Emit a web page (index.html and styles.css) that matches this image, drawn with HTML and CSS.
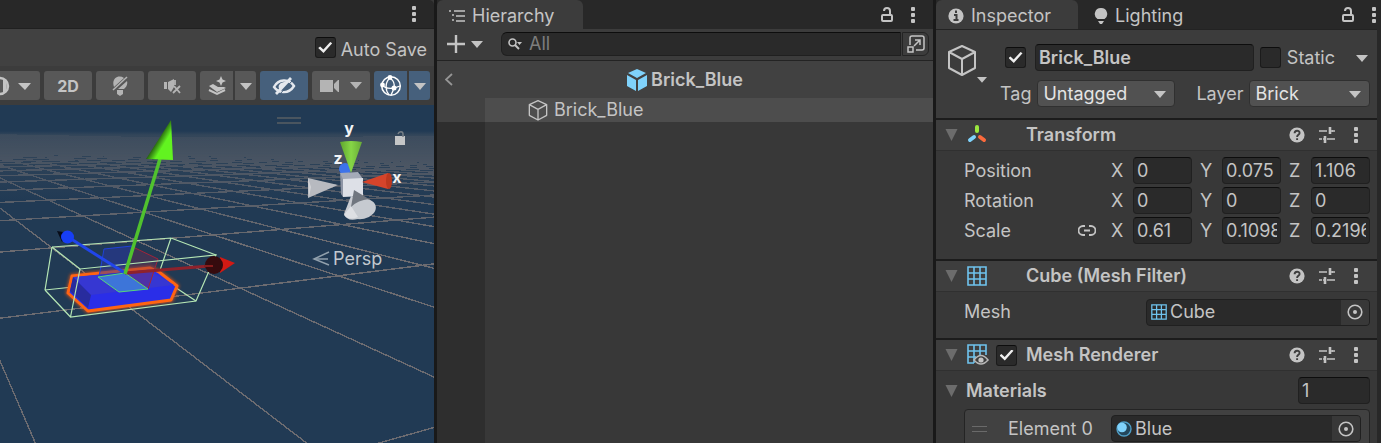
FILE: index.html
```html
<!DOCTYPE html>
<html lang="en">
<head>
<meta charset="utf-8">
<title>Prefab editor</title>
<link rel="stylesheet" href="styles.css">
</head>
<body>
<svg class="defs" aria-hidden="true">
  <symbol id="caret" viewBox="0 0 12 8"><path d="M0 1h12L6 8z" fill="currentColor"/></symbol>
  <symbol id="fold" viewBox="0 0 12 12"><path d="M0 0h12L6 12z" fill="currentColor"/></symbol>
  <symbol id="dots" viewBox="0 0 4 16"><g fill="currentColor"><rect width="4" height="4" rx="1"/><rect y="6" width="4" height="4" rx="1"/><rect y="12" width="4" height="4" rx="1"/></g></symbol>
  <symbol id="lock" viewBox="0 0 12 16"><g fill="none" stroke="currentColor" stroke-width="2"><rect x="1" y="8" width="10" height="6" rx="1"/><path d="M3 4c0-4 6-4 6 0v4"/></g></symbol>
  <symbol id="cube" viewBox="0 0 30 32"><path d="M15 2l13 6v16l-13 7L2 24V8zM2 8l13 7 13-7M15 15v16" fill="none" stroke="currentColor" stroke-width="2" stroke-linejoin="round"/></symbol>
  <symbol id="prefab" viewBox="0 0 20 22"><path d="M10 0l9 4-9 5-9-5z M0 6l9 5v11l-9-5z M20 6l-9 5v11l9-5z" fill="#7fd2fb"/></symbol>
  <symbol id="help" viewBox="0 0 16 16"><circle cx="8" cy="8" r="7.6" fill="currentColor"/><path d="M5.600 6.200c0-3.400 5-3.200 5-.3 0 1.900-2.500 1.900-2.500 4M8.100 11.200v1.900" fill="none" stroke="#3e3e3e" stroke-width="1.900"/></symbol>
  <symbol id="preset" viewBox="0 0 16 16"><path d="M0 4h8M13 4h3M0 12h3M8 12h8" stroke="currentColor" stroke-width="1.600"/><path d="M11 0v7M6 9v7" stroke="currentColor" stroke-width="2.600"/><path d="M11 4h3M4 12h3" stroke="currentColor" stroke-width="1.600"/></symbol>
  <symbol id="mesh" viewBox="0 0 20 20"><path d="M1 1h18v18H1zM7 1v18M13 1v18M1 7h18M1 13h18" fill="none" stroke="#6fc3ee" stroke-width="1.600"/></symbol>
  <symbol id="target" viewBox="0 0 16 16"><circle cx="8" cy="8" r="6.800" fill="none" stroke="currentColor" stroke-width="1.600"/><circle cx="8" cy="8" r="2" fill="currentColor"/></symbol>
</svg>

<main class="editor">
  <section class="panel" aria-label="Scene">
    <header class="tabs tabs-end">
      <button class="icon-btn" aria-label="Scene menu"><svg class="i-dots"><use href="#dots"/></svg></button>
    </header>
    <div class="autosave"><input class="check" type="checkbox" id="autosave" checked><label for="autosave">Auto Save</label></div>
    <div class="tools">
      <button class="tool shade" aria-label="Draw mode"><svg width="40" height="20" viewBox="0 0 40 20"><circle cx="7" cy="10" r="8" fill="none" stroke="#c4c4c4" stroke-width="2.500"/><path d="M10 2c5 3 5 13 0 16M25 7h13l-6 7z" fill="#c4c4c4"/></svg></button>
      <button class="tool t2d">2D</button>
      <button class="tool" aria-label="Lighting"><svg width="20" height="20" viewBox="0 0 20 20"><path d="M4 11C1 3 8-2 14 2zM17 5c1 4-1 6-3 8H8zM7 14h6v4l-3 2-3-2z" fill="#b4b4b4"/><path d="M3 14L17 1" stroke="#b4b4b4" stroke-width="1.500"/></svg></button>
      <button class="tool" aria-label="Audio"><svg width="20" height="20" viewBox="0 0 20 20"><path d="M2 6h3v7H2zM6 6l6-3v8l-3 5-3-3z" fill="#b4b4b4"/><path d="M12 10l6 7M18 10l-7 7M13 4v5" stroke="#b4b4b4" stroke-width="1.800"/></svg></button>
      <div class="pair">
        <button class="tool main" aria-label="Effects"><svg width="20" height="20" viewBox="0 0 20 20"><path d="M2 10l4-2 5 3h6l2 1-9 4zM14 0l1.500 3.500L19 5l-3.500 1.500L14 10l-1.500-3.500L9 5l3.500-1.500z" fill="#c4c4c4"/><path d="M2 14l8 4 8-4" fill="none" stroke="#c4c4c4" stroke-width="2"/></svg></button>
        <button class="tool drop" aria-label="Effects menu"><svg class="i-caret"><use href="#caret"/></svg></button>
      </div>
      <button class="tool on" aria-label="Scene visibility"><svg width="24" height="20" viewBox="0 0 24 20"><path d="M2 11C6 3 17 2 22 10 17 18 7 18 2 11z" fill="none" stroke="#e4e8ee" stroke-width="2.400"/><path d="M9 7l6-2-7 9c-2-2-2-5 1-7z" fill="#e4e8ee"/><path d="M4 18L19 2" stroke="#e4e8ee" stroke-width="2.800"/><path d="M7 19L21 4" stroke="#46607c" stroke-width="1"/></svg></button>
      <button class="tool cam" aria-label="Camera"><svg width="42" height="14" viewBox="0 0 42 14"><path d="M0 1h13v12H0zM14 5l4-4h1v12h-1l-4-4zM30 3h12l-6 7z" fill="#b4b4b4"/></svg></button>
      <div class="pair">
        <button class="tool on main" aria-label="Gizmos"><svg width="24" height="24" viewBox="0 0 24 24"><circle cx="12" cy="12" r="9.300" fill="none" stroke="#fff" stroke-width="1.500"/><path d="M11 4C6 8 6 16 10 21M11 4c4 3 5 6 4 10-1 3-2 5-3 7M3 11c3 3 7 4 12 3l6-2" fill="none" stroke="#fff" stroke-width="1.300"/><g fill="#fff"><circle cx="11" cy="3.500" r="2.400"/><circle cx="3.500" cy="11" r="2.400"/><circle cx="15" cy="14" r="2.500"/></g></svg></button>
        <button class="tool on drop" aria-label="Gizmos menu"><svg class="i-caret"><use href="#caret"/></svg></button>
      </div>
    </div>
    <svg class="viewport" viewBox="0 105 434 338" preserveAspectRatio="xMinYMin slice" role="img" aria-label="Scene view">
      <defs>
        <linearGradient id="haze" x1="0" y1="0" x2="0" y2="1"><stop offset="0" stop-color="#5f6368" stop-opacity="0"/><stop offset=".06" stop-color="#5f6368" stop-opacity=".3"/><stop offset=".35" stop-color="#5f6368" stop-opacity=".22"/><stop offset="1" stop-color="#5f6368" stop-opacity="0"/></linearGradient>
        <linearGradient id="fade" gradientUnits="userSpaceOnUse" x1="0" y1="134" x2="0" y2="240"><stop offset="0" stop-color="#fff" stop-opacity=".15"/><stop offset=".3" stop-color="#fff" stop-opacity=".5"/><stop offset="1" stop-color="#fff"/></linearGradient>
        <mask id="far" maskUnits="userSpaceOnUse" x="0" y="134" width="434" height="309"><rect y="134" width="434" height="309" fill="url(#fade)"/></mask>
        <linearGradient id="gcone" gradientUnits="userSpaceOnUse" x1="153" y1="140" x2="163" y2="146"><stop offset="0" stop-color="#0a1a08"/><stop offset="1" stop-color="#62f320"/></linearGradient>
        <linearGradient id="ycone"><stop offset="0" stop-color="#5fa52e"/><stop offset=".5" stop-color="#86d646"/><stop offset="1" stop-color="#68aa38"/></linearGradient>
        <filter id="glow" x="-10%" y="-20%" width="120%" height="140%"><feGaussianBlur stdDeviation="1.500"/></filter>
      </defs>
      <rect y="105" width="434" height="338" fill="#213a54"/>
      <rect y="131" width="434" height="70" fill="url(#haze)"/>
      <g mask="url(#far)"><g id="grid" stroke="#6c6b70" stroke-width="1.400" shape-rendering="crispEdges"></g></g>

      <g fill="none" stroke="#b5e6b4" stroke-width="1.200"><path d="M52 247l119-9 45 17M45 290l112-12M171 238l-13 38 38 25M52 247l-7 43"/></g>
      <path d="M72 276l78-8 9 4 18 14-6 14-83 11-20-18z" fill="none" stroke="#ff5a10" stroke-width="5" stroke-linejoin="round" opacity=".6" filter="url(#glow)"/>
      <path d="M72 276l78-8 9 4 18 14-6 14-83 11-20-18z" fill="#2a2ee8" stroke="#ff6412" stroke-width="3" stroke-linejoin="round"/>
      <path d="M73 277l76-7 25 15-83 10z" fill="#3637d2"/>
      <path d="M73 277l18 18-3 13-18-17z" fill="#282c9e"/>
      <path d="M104 249l28-3-7 27-26 4z" fill="#2b37b0" fill-opacity=".45" stroke="#2041d8"/>
      <path d="M133 247l25 12-10 30-23-16z" fill="#7a2a55" fill-opacity=".35" stroke="#a0243a"/>
      <path d="M98 277l27-4 23 16-29 3z" fill="#4090dc" fill-opacity=".7" stroke="#57d67a"/>
      <path d="M52 247l28 22 136-14-20 46-125.500 16L45 290M80 269l-9.500 48" fill="none" stroke="#b5e6b4" stroke-width="1.200"/>
      <path d="M125 273L68 237" stroke="#2145ea" stroke-width="3"/>
      <path d="M57 231l12 2-7 9z" fill="#080c18"/><circle cx="67.500" cy="237" r="6.500" fill="#173ef5"/>
      <path d="M125 273l84-7" stroke="#8e222c" stroke-width="3"/>
      <path d="M220 257l15 6-15 10z" fill="#d21a14"/><circle cx="214" cy="265" r="9" fill="#350b0e"/><path d="M204 266h9" stroke="#851c1c" stroke-width="2"/>
      <path d="M125 274l35-115" stroke="#50c22e" stroke-width="3.500"/>
      <path d="M171 120l2 40-27-1z" fill="url(#gcone)"/>

      <path d="M277 118h24M277 123h24" stroke="#74706b" stroke-width="1.200"/>
      <circle cx="345" cy="169" r="6" fill="#3d73ea"/>
      <path d="M340 142q11-2 22 0l-11 31z" fill="url(#ycone)"/>
      <path d="M340 173l18-1 5 7-21 1z" fill="#a4aab8"/><path d="M340 173l3 6v18l-2-3z" fill="#8d95a5"/><path d="M343 179l20-1v18l-20 1z" fill="#dde0e7"/>
      <path d="M338 185l-30-7v20z" fill="#b7bac0"/><path d="M308 178l3 9-2 10z" fill="#d2d3d6"/>
      <path d="M362 182l26-9q5 8 0 16z" fill="#d5442b"/><ellipse cx="389" cy="181" rx="3" ry="8" fill="#bc381f"/>
      <path d="M351 196l-7 18q3 8 14 5l12-18z" fill="#c9ccd2"/><ellipse cx="362" cy="209" rx="14" ry="10" transform="rotate(-12 362 209)" fill="#c6cad0"/><path d="M351 206l-7 9q5 6 14 2z" fill="#dddfe3"/><path d="M354 190l15 9q-11 1-18 8z" fill="#70767f"/>
      <g class="axis"><text x="349" y="134">y</text><text x="338" y="164">z</text><text x="397" y="183">x</text></g>
      <path d="M395 136h10v9h-10z" fill="#c5c6c7"/><path d="M398 134c1-3 5-3 5 0v3" fill="none" stroke="#777f86" stroke-width="1.500"/>
      <path d="M329 252l-15 7 15 6" fill="none" stroke="#91a0ac" stroke-width="1.500"/><path d="M314 259h14" stroke="#91a0ac" stroke-width="1.500"/>
      <text class="persp" x="333" y="265">Persp</text>
    </svg>
  </section>

  <section class="panel" aria-label="Hierarchy">
    <header class="tabs">
      <button class="tab tab-on hier-tab"><svg width="16" height="12" viewBox="0 0 16 12"><path d="M0 1h2M3 5h2M3 10h2M5 1h11M7 6h9M7 11h9" stroke="#c4c4c4" stroke-width="1.600"/></svg>Hierarchy</button>
      <span class="tab-tools">
        <button class="icon-btn" aria-label="Lock hierarchy"><svg class="i-lock"><use href="#lock"/></svg></button>
        <button class="icon-btn" aria-label="Hierarchy menu"><svg class="i-dots"><use href="#dots"/></svg></button>
      </span>
    </header>
    <div class="hier-bar">
      <button class="icon-btn add" aria-label="Create"><svg width="18" height="18" viewBox="0 0 18 18"><path d="M0 9h18M9 0v18" stroke="#c4c4c4" stroke-width="2.400"/></svg><svg class="i-caret"><use href="#caret"/></svg></button>
      <div class="search">
        <svg width="14" height="12" viewBox="0 0 14 12"><circle cx="4.500" cy="4.500" r="3.500" fill="none" stroke="#c4c4c4" stroke-width="1.600"/><path d="M7 7l4 4" stroke="#c4c4c4" stroke-width="2"/><path d="M9 4h5l-2.500 3z" fill="#c4c4c4"/></svg>
        <input type="text" placeholder="All" aria-label="Search hierarchy">
      </div>
      <button class="picker" aria-label="Open search"><svg width="18" height="18" viewBox="0 0 18 18"><path d="M3 10V3q0-2 2-2h10q2 0 2 2v10q0 2-2 2H9M1 12h5v5H1zM7 11l6-6M8 5h5v5" fill="none" stroke="#c4c4c4" stroke-width="1.500"/></svg></button>
    </div>
    <div class="crumb">
      <button class="icon-btn" aria-label="Back"><svg width="8" height="13" viewBox="0 0 8 13"><path d="M7 1L1 6.500 7 12" fill="none" stroke="#969696" stroke-width="1.800"/></svg></button>
      <h2><svg width="20" height="22"><use href="#prefab"/></svg>Brick_Blue</h2>
    </div>
    <div class="tree">
      <div class="gutter gutter-on"></div>
      <div class="node"><svg width="20" height="22"><use href="#cube"/></svg>Brick_Blue</div>
      <div class="gutter"></div><div></div>
    </div>
  </section>

  <section class="panel inspector" aria-label="Inspector">
    <header class="tabs">
      <button class="tab tab-on insp-tab"><svg width="16" height="16" viewBox="0 0 16 16"><circle cx="8" cy="8" r="7.600" fill="#c4c4c4"/><path d="M8 2.500v2.500M6 7h2.500v5M5.500 12h5" fill="none" stroke="#3c3c3c" stroke-width="2"/></svg>Inspector</button>
      <button class="tab light-tab"><svg width="14" height="18" viewBox="0 0 14 18"><path d="M7 1a6 6 0 0 1 3.500 11h-7A6 6 0 0 1 7 1zM4 14h6l-2 3H6z" fill="#c4c4c4"/></svg>Lighting</button>
      <span class="tab-tools insp-tools">
        <button class="icon-btn" aria-label="Lock inspector"><svg class="i-lock"><use href="#lock"/></svg></button>
        <button class="icon-btn" aria-label="Inspector menu"><svg class="i-dots"><use href="#dots"/></svg></button>
      </span>
    </header>
    <div class="insp-body">
      <div class="object">
        <button class="icon-btn object-icon" aria-label="Select icon"><svg width="30" height="32"><use href="#cube"/></svg><svg class="i-caret"><use href="#caret"/></svg></button>
        <div class="object-fields">
          <div class="object-row name-row">
            <input class="check" type="checkbox" checked aria-label="Active">
            <input class="field name" type="text" value="Brick_Blue" aria-label="Name">
            <input class="check" type="checkbox" id="static"><label for="static">Static</label>
            <button class="icon-btn static-menu" aria-label="Static flags"><svg class="i-caret"><use href="#caret"/></svg></button>
          </div>
          <div class="object-row">
            <label for="tag">Tag</label>
            <span class="pick tag"><select id="tag"><option>Untagged</option></select><svg class="i-caret"><use href="#caret"/></svg></span>
            <label class="layer-label" for="layer">Layer</label>
            <span class="pick layer"><select id="layer"><option>Brick</option></select><svg class="i-caret"><use href="#caret"/></svg></span>
          </div>
        </div>
      </div>

      <div class="comp">
        <svg class="i-fold"><use href="#fold"/></svg>
        <svg width="20" height="20" viewBox="0 0 20 20"><g stroke-width="4" stroke-linecap="round"><path d="M10 2v4" stroke="#9be83f"/><path d="M7 12l-4 3" stroke="#7fd2fb"/><path d="M13 12l4 3" stroke="#fb6a3c"/></g></svg>
        <h3 class="wide">Transform</h3>
        <span class="comp-tools"><button class="icon-btn" aria-label="Transform help"><svg class="i16"><use href="#help"/></svg></button><button class="icon-btn" aria-label="Transform presets"><svg class="i16"><use href="#preset"/></svg></button><button class="icon-btn" aria-label="Transform menu"><svg class="i-dots"><use href="#dots"/></svg></button></span>
      </div>
      <div class="vectors">
        <div class="vector"><span>Position</span><label>X<input class="field" value="0"></label><label>Y<input class="field" value="0.075"></label><label>Z<input class="field" value="1.106"></label></div>
        <div class="vector"><span>Rotation</span><label>X<input class="field" value="0"></label><label>Y<input class="field" value="0"></label><label>Z<input class="field" value="0"></label></div>
        <div class="vector"><span class="scale">Scale<svg width="18" height="12" viewBox="0 0 18 12"><path d="M7 1H5a4.500 4.500 0 0 0 0 9h2M11 1h2a4.500 4.500 0 0 1 0 9h-2M6 5.500h6" fill="none" stroke="#c4c4c4" stroke-width="1.800"/></svg></span><label>X<input class="field" value="0.61"></label><label>Y<input class="field" value="0.1098"></label><label>Z<input class="field" value="0.2196"></label></div>
      </div>

      <div class="comp">
        <svg class="i-fold"><use href="#fold"/></svg>
        <svg width="20" height="20"><use href="#mesh"/></svg>
        <h3 class="wide">Cube (Mesh Filter)</h3>
        <span class="comp-tools"><button class="icon-btn" aria-label="Mesh Filter help"><svg class="i16"><use href="#help"/></svg></button><button class="icon-btn" aria-label="Mesh Filter presets"><svg class="i16"><use href="#preset"/></svg></button><button class="icon-btn" aria-label="Mesh Filter menu"><svg class="i-dots"><use href="#dots"/></svg></button></span>
      </div>
      <div class="mesh-row">
        <span>Mesh</span>
        <div class="object-field"><svg width="16" height="16"><use href="#mesh"/></svg><span>Cube</span><button aria-label="Select mesh"><svg class="i16"><use href="#target"/></svg></button></div>
      </div>

      <div class="comp">
        <svg class="i-fold"><use href="#fold"/></svg>
        <svg width="22" height="22" viewBox="0 0 22 22"><path d="M7 19H1V1h18v10M7 1v18M13 1v11M1 7h18M1 13h8" fill="none" stroke="#6fc3ee" stroke-width="1.600"/><path d="M7 16q7-9 14 0-7 8-14 0z" fill="#3e3e3e" stroke="#b8b8b8" stroke-width="1.600"/><circle cx="14" cy="16" r="2.600" fill="#c4c4c4"/></svg>
        <input class="check" type="checkbox" checked aria-label="Mesh Renderer enabled">
        <h3>Mesh Renderer</h3>
        <span class="comp-tools"><button class="icon-btn" aria-label="Mesh Renderer help"><svg class="i16"><use href="#help"/></svg></button><button class="icon-btn" aria-label="Mesh Renderer presets"><svg class="i16"><use href="#preset"/></svg></button><button class="icon-btn" aria-label="Mesh Renderer menu"><svg class="i-dots"><use href="#dots"/></svg></button></span>
      </div>
      <div class="materials">
        <svg class="i-fold"><use href="#fold"/></svg>
        <h3>Materials</h3>
        <input class="field" value="1" aria-label="Materials count">
      </div>
      <div class="list">
        <svg width="15" height="8" viewBox="0 0 15 8"><path d="M0 1.500h15M0 6.500h15" stroke="#6a6a6a"/></svg>
        <span>Element 0</span>
        <div class="object-field"><svg width="16" height="16" viewBox="0 0 16 16"><circle cx="8" cy="8" r="7" fill="#24475c" stroke="#4e9cc4" stroke-width="1.400"/><circle cx="6" cy="6.500" r="4.800" fill="#7fd2fb"/></svg><span>Blue</span><button aria-label="Select material"><svg class="i16"><use href="#target"/></svg></button></div>
      </div>
    </div>
  </section>
</main>
<script src="grid.js"></script>
</body>
</html>
```
FILE: styles.css
```css
* { box-sizing: border-box; }
body {
  margin: 0;
  background: #191919;
  color: #c4c4c4;
  font: 18px/24px Inter, "Liberation Sans", sans-serif;
}
button, input, select { font: inherit; color: inherit; }
button { border: 0; padding: 0; margin: 0; background: none; }
svg { display: block; flex: none; }
h2, h3 { margin: 0; font-size: 18px; font-weight: 600; white-space: nowrap; }
.defs { position: absolute; width: 0; height: 0; }

.editor {
  display: grid;
  grid-template-columns: minmax(0, 434fr) minmax(0, 496fr) minmax(0, 445fr);
  gap: 3px;
  height: 100vh;
  overflow: hidden;
}
.panel { display: flex; flex-direction: column; min-width: 0; min-height: 0; background: #383838; }

.icon-btn { display: flex; align-items: center; justify-content: center; }
.i-dots { width: 4px; height: 16px; }
.i-caret { width: 12px; height: 8px; }
.i-fold { width: 13px; height: 12px; color: #6c6c6c; }
.i-lock { width: 12px; height: 16px; }
.i16 { width: 16px; height: 16px; }

.tabs { display: flex; flex: none; height: 29px; background: #282828; }
.tabs-end { justify-content: flex-end; padding-right: 18px; border-bottom: 1px solid #202020; border-radius: 0 5px 0 0; }
.tab { display: flex; align-items: center; gap: 7px; padding-top: 3px; white-space: nowrap; }
.tab-on { background: #3c3c3c; border-radius: 6px 6px 0 0; }
.hier-tab { padding-left: 12px; padding-right: 29px; }
.insp-tab { padding-left: 12px; padding-right: 27px; }
.light-tab { padding-left: 16px; }
.tab-tools { display: flex; gap: 18px; margin-left: auto; padding-right: 18px; }
.insp-tools { padding-right: 5px; }

.check {
  appearance: none;
  flex: none;
  width: 21px;
  height: 21px;
  margin: 0;
  border: 1px solid #1b1b1b;
  border-top-color: #0d0d0d;
  border-radius: 3px;
  background: #2a2a2a;
  display: grid;
  place-items: center;
}
.check:checked::before {
  content: "";
  width: 14px;
  height: 11px;
  background: #eee;
  clip-path: polygon(0 55%, 14% 42%, 37% 68%, 86% 0, 100% 12%, 38% 100%);
}

.autosave { display: flex; flex: none; align-items: center; justify-content: flex-end; gap: 5px; height: 37px; padding-right: 7px; background: #414141; }
.autosave label { padding-top: 4px; }
.tools { display: flex; flex: none; align-items: center; justify-content: flex-end; gap: 4px; height: 39px; padding-right: 4px; background: #3c3c3c; }
.tool { display: flex; flex: none; align-items: center; justify-content: center; width: 48px; height: 29px; border-radius: 3px; background: #585858; }
.t2d { font-weight: 700; font-size: 16px; }
.shade { justify-content: flex-end; padding-right: 7px; }
.cam { width: 58px; }
.pair { display: flex; gap: 2px; }
.main { width: 33px; border-radius: 3px 0 0 3px; }
.drop { width: 21px; border-radius: 0 3px 3px 0; }
.on { background: #46607c; }
.viewport { flex: 1; width: 100%; min-height: 0; }
.axis { font-size: 16px; font-weight: 700; fill: #f2f4f6; text-anchor: middle; }
.persp { font-size: 18px; fill: #c2c8ce; }

.hier-bar { display: flex; flex: none; align-items: center; height: 32px; padding: 0 4px 2px 10px; background: #3c3c3c; border-bottom: 1px solid #232323; }
.add { gap: 6px; margin-right: 18px; }
.search { display: flex; flex: 1; align-items: center; gap: 5px; min-width: 0; height: 24px; padding-left: 6px; background: #2a2a2a; border: 1px solid #202020; border-top-color: #0d0d0d; border-radius: 6px 0 0 6px; }
.search input { flex: 1; min-width: 0; height: 22px; padding: 0 2px; border: 0; outline: 0; background: none; }
.search input::placeholder { color: #7d7d7d; opacity: 1; }
.picker { display: flex; align-items: center; justify-content: center; width: 27px; height: 24px; margin-left: 1px; border: 1px solid #242424; border-radius: 0 6px 6px 0; }
.crumb { display: grid; grid-template-columns: 8px 1fr 8px; flex: none; align-items: center; height: 37px; padding: 0 8px; background: #414141; }
.crumb h2 { display: flex; align-items: center; justify-content: center; gap: 4px; }
.tree { display: grid; flex: 1; grid-template: 24px 1fr / 48px 1fr; }
.gutter { background: #2e2e2e; }
.gutter-on { background: #414141; }
.node { display: flex; align-items: center; gap: 6px; padding-left: 43px; background: #4d4d4d; }

.inspector { background: #282828; }
.insp-body { flex: 1; min-height: 0; margin-right: 4px; overflow: hidden; background: #383838; border-top: 1px solid #232323; }
.object { display: flex; height: 88px; padding: 14px 7px 0 11px; background: #3c3c3c; }
.object-icon { align-self: flex-start; align-items: flex-start; justify-content: flex-start; width: 53px; height: 39px; }
.object-icon .i-caret { align-self: flex-end; width: 10px; height: 7px; }
.object-fields { display: flex; flex: 1; flex-direction: column; gap: 9px; min-width: 0; }
.object-row { display: flex; align-items: center; gap: 6px; height: 27px; }
.name-row { padding-left: 5px; }
.field { width: 59px; min-width: 0; height: 27px; padding: 0 3px; border: 1px solid #202020; border-top-color: #0d0d0d; border-radius: 4px; background: #2a2a2a; outline: 0; }
.name { flex: 1; margin-left: 3px; font-weight: 600; }
.static-menu { width: 12px; margin-left: 15px; margin-right: 2px; }
.layer-label { margin-left: 15px; }
.pick { display: grid; align-items: center; flex: 135 1 0; min-width: 0; }
.pick > * { grid-area: 1 / 1; }
.pick .i-caret { justify-self: end; margin-right: 9px; pointer-events: none; }
.pick select { appearance: none; width: 100%; height: 27px; padding: 0 5px; border: 1px solid #303030; border-radius: 4px; background: #515151; color: #e4e4e4; }
.layer { flex-grow: 118; }

.comp { display: flex; align-items: center; gap: 9px; height: 33px; padding: 0 19px 0 9px; background: #3e3e3e; border-top: 2px solid #1c1c1c; border-bottom: 1px solid #303030; }
.comp .check { margin-left: -2px; }
.wide { margin-left: 30px; }
.comp-tools { display: flex; gap: 22px; margin-left: auto; }
.comp-tools button:nth-child(2) { margin-left: -8px; margin-right: -3px; }
.vectors { display: flex; flex-direction: column; gap: 3px; height: 108px; padding: 6px 7px 0 28px; }
.vector { display: flex; align-items: center; gap: 8px; }
.vector > span { flex: 1; min-width: 0; }
.vector label { display: flex; align-items: center; justify-content: space-between; width: 81px; }
.scale { display: flex; align-items: center; justify-content: space-between; padding-right: 7px; }
.mesh-row { display: flex; align-items: center; height: 46px; padding: 0 7px 6px 28px; }
.mesh-row > span { flex: 1; }
.mesh-row .object-field { flex: 0 1 224px; }
.object-field { display: flex; align-items: center; gap: 3px; min-width: 0; height: 27px; padding-left: 4px; background: #2a2a2a; border: 1px solid #202020; border-radius: 4px; overflow: hidden; }
.object-field button { display: flex; align-items: center; justify-content: center; width: 28px; height: 25px; margin-left: auto; background: #383838; }
.materials { display: flex; align-items: center; gap: 8px; height: 38px; padding: 1px 7px 0 9px; }
.materials .field { width: 72px; margin-left: auto; }
.list { display: flex; align-items: center; height: 50px; margin: 0 7px 0 28px; padding: 0 8px 11px 7px; background: #414141; border: 1px solid #242424; border-radius: 4px; }
.list > span { flex: 1; margin-left: 21px; }
.list .object-field { flex: 0 1 250px; }
```
FILE: grid.js
```js
// Ground grid: two families of parallel lines meeting at vanishing points on the horizon.
const grid = document.getElementById("grid");
const horizon = 133;

function line(x1, y1, x2, y2) {
  const el = document.createElementNS("http://www.w3.org/2000/svg", "line");
  Object.entries({ x1, y1, x2, y2 }).forEach(([k, v]) => el.setAttribute(k, v));
  grid.append(el);
}

for (let k = 0; k < 60; k++) {
  const run = 0.43 + 0.875 * k;
  line(-98, horizon, -98 + run * 340, horizon + 340);
}
for (let k = 0; k < 60; k++) {
  line(0, horizon + 1 / (0.0024 + 0.003 * k), 1480, horizon);
}
```
